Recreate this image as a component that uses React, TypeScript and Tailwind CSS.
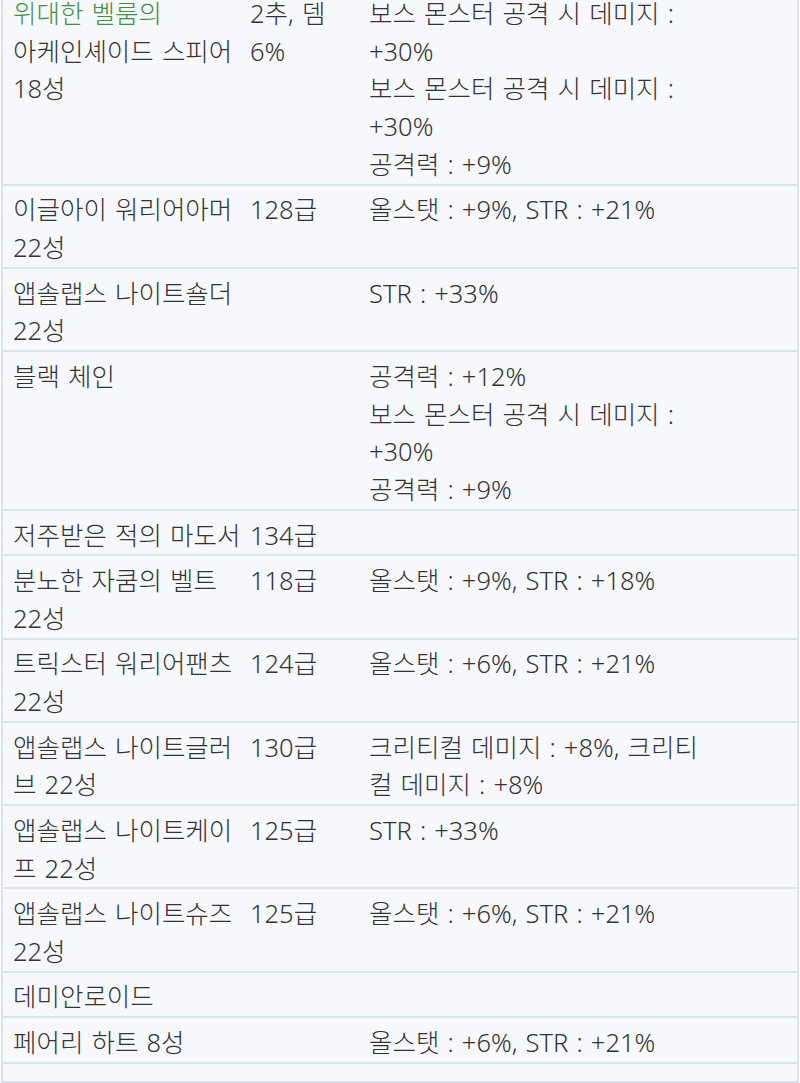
import React from "react";

type Row = {
  name: React.ReactNode;
  tier?: string;
  opts?: string[];
};

const rows: Row[] = [
  {
    name: (
      <>
        <span className="block text-[#3f9142]">위대한 벨룸의</span>
        아케인셰이드 스피어 18성
      </>
    ),
    tier: "2추, 뎀 6%",
    opts: [
      "보스 몬스터 공격 시 데미지 : +30%",
      "보스 몬스터 공격 시 데미지 : +30%",
      "공격력 : +9%",
    ],
  },
  { name: "이글아이 워리어아머 22성", tier: "128급", opts: ["올스탯 : +9%, STR : +21%"] },
  { name: "앱솔랩스 나이트숄더 22성", opts: ["STR : +33%"] },
  {
    name: "블랙 체인",
    opts: ["공격력 : +12%", "보스 몬스터 공격 시 데미지 : +30%", "공격력 : +9%"],
  },
  { name: "저주받은 적의 마도서", tier: "134급" },
  { name: "분노한 자쿰의 벨트 22성", tier: "118급", opts: ["올스탯 : +9%, STR : +18%"] },
  { name: "트릭스터 워리어팬츠 22성", tier: "124급", opts: ["올스탯 : +6%, STR : +21%"] },
  {
    name: "앱솔랩스 나이트글러브 22성",
    tier: "130급",
    opts: ["크리티컬 데미지 : +8%, 크리티컬 데미지 : +8%"],
  },
  { name: "앱솔랩스 나이트케이프 22성", tier: "125급", opts: ["STR : +33%"] },
  { name: "앱솔랩스 나이트슈즈 22성", tier: "125급", opts: ["올스탯 : +6%, STR : +21%"] },
  { name: "데미안로이드" },
  { name: "페어리 하트 8성", opts: ["올스탯 : +6%, STR : +21%"] },
];

export default function App() {
  return (
    <div className="w-[800px] h-[1083px] overflow-hidden bg-white">
      <div
        className="-mt-[11px] ml-px w-[798px] border-x-2 border-[#dde3ea] bg-[#f6f8fc] text-[25.5px] leading-[37.75px] font-light text-[#333] [word-spacing:1.5px]"
        style={{ fontFamily: '"Noto Sans", "Noto Sans CJK KR", sans-serif' }}
      >
        {rows.map((r, i) => (
          <div
            key={i}
            className="grid grid-cols-[243px_113px_1fr] border-b-2 border-[#dde3ea]"
          >
            <div className="pl-[10px] pt-[5.75px]">{r.name}</div>
            <div className="pl-[4px] pr-[9px] pt-[5.75px]">{r.tier}</div>
            <div className="pl-[10px] pt-[5.75px]">
              <div className="max-w-[340px]">
                {r.opts?.map((o, j) => (
                  <div key={j}>{o}</div>
                ))}
              </div>
            </div>
          </div>
        ))}
        <div className="h-[19px] border-b-2 border-[#dde3ea]" />
      </div>
    </div>
  );
}
